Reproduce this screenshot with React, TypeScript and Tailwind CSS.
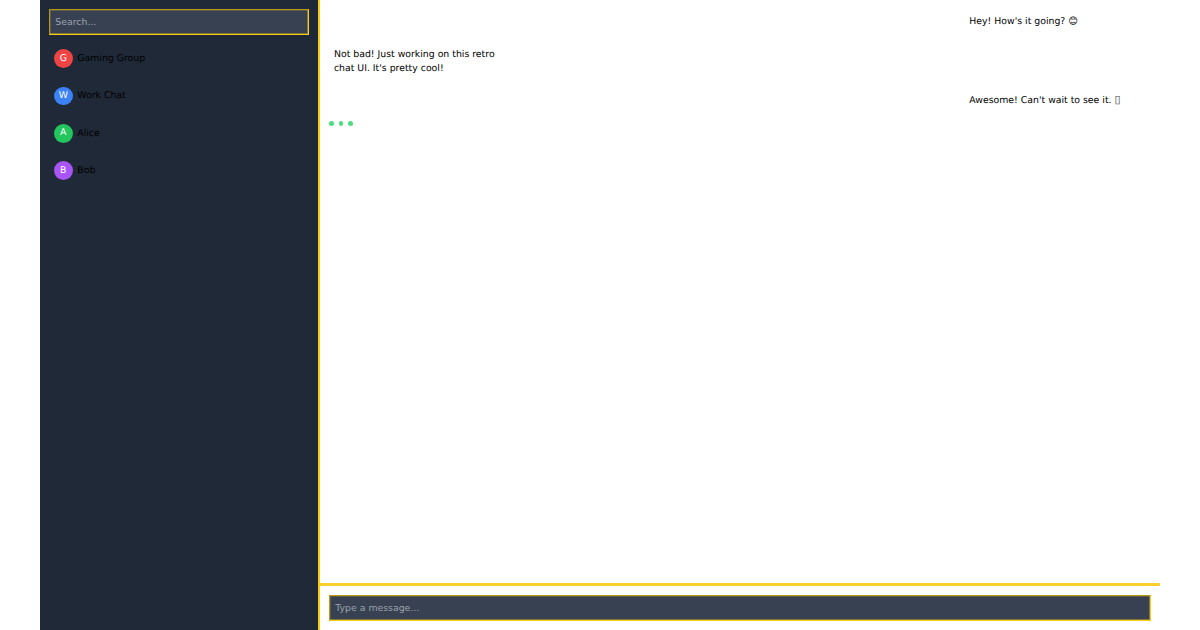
const chats = [
  { id: 1, name: "Gaming Group", color: "bg-[#ef4444]" },
  { id: 2, name: "Work Chat", color: "bg-[#3b82f6]" },
  { id: 3, name: "Alice", color: "bg-[#22c55e]" },
  { id: 4, name: "Bob", color: "bg-[#a855f7]" },
]

const messages = [
  { id: 1, text: "Hey! How's it going? 😊", mine: true },
  { id: 2, text: "Not bad! Just working on this retro chat UI. It's pretty cool!", mine: false },
  { id: 3, text: "Awesome! Can't wait to see it. ", tofu: true, mine: true },
]

const inputClass =
  "h-[26px] w-full border border-t-[#b89a18] border-l-[#b89a18] border-r-[#facc15] border-b-[#facc15] bg-[#374151] px-[5px] pb-px text-white shadow-[inset_1px_1px_0_rgba(250,204,21,0.2),inset_-1px_-1px_0_rgba(250,204,21,0.4)] placeholder:text-[#9ca3af]"

export default function App() {
  return (
    <div className="h-[630px] overflow-hidden bg-white font-['DejaVu_Sans',sans-serif] text-[9.33px] leading-[14px] text-black [text-rendering:geometricPrecision]">
      <div className="mx-auto flex h-full w-[1120px]">
        <aside className="w-[280px] shrink-0 border-r-2 border-[#facc15] bg-[#1f2937] p-[9.33px]">
          <input placeholder="Search..." className={inputClass} />
          <div className="mt-[4.67px]">
            {chats.map((chat) => (
              <div key={chat.id} className="flex h-[37.33px] items-center gap-[4.67px] px-[4.67px]">
                <div className={`flex h-[18.67px] w-[18.67px] items-center justify-center rounded-full text-white ${chat.color}`}>
                  {chat.name[0]}
                </div>
                <span className="mt-[0.67px]">{chat.name}</span>
              </div>
            ))}
          </div>
        </aside>

        <main className="flex min-w-0 flex-1 flex-col">
          <div className="flex flex-1 flex-col gap-[9.33px] px-[9.33px] pt-[10.33px] pb-[9.33px]">
            {messages.map((msg) => (
              <div key={msg.id} className={`w-[186px] p-[4.67px] ${msg.mine ? "self-end" : "self-start"}`}>
                {msg.text}
                {msg.tofu && <span className="text-[11px] leading-[0] text-[#444444]">▯</span>}
              </div>
            ))}
            <div className="-mt-px flex gap-[4.67px]">
              <span className="h-[4.67px] w-[4.67px] rounded-full bg-[#4ade80]" />
              <span className="h-[4.67px] w-[4.67px] rounded-full bg-[#4ade80]" />
              <span className="h-[4.67px] w-[4.67px] rounded-full bg-[#4ade80]" />
            </div>
          </div>
          <div className="border-t-[3px] border-[#fad02e] px-[9.33px] py-[9px]">
            <input placeholder="Type a message..." className={inputClass} />
          </div>
        </main>
      </div>
    </div>
  )
}
